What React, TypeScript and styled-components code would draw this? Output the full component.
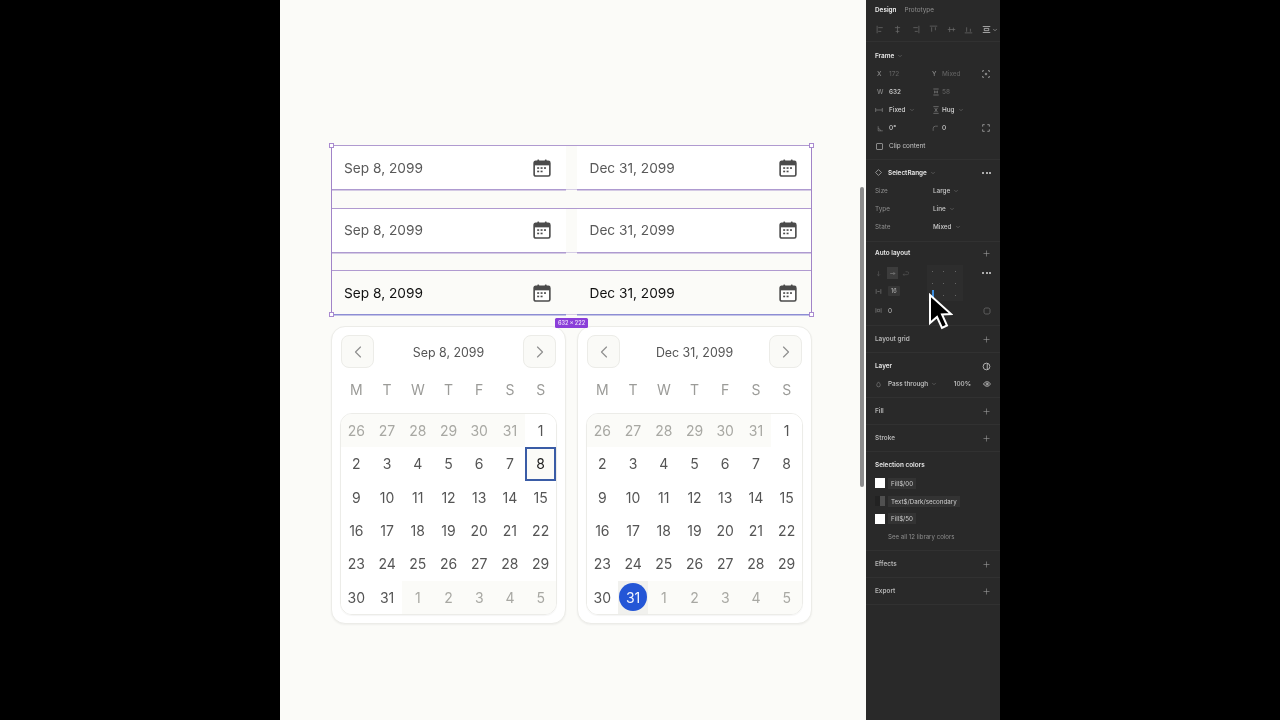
import React from "react";
import styled, { createGlobalStyle } from "styled-components";
import { ChevronLeft, ChevronRight, Plus, Eye, ChevronDown } from "lucide-react";

const Global = createGlobalStyle`
  html, body { margin: 0; padding: 0; background: #000; height: 100%; overflow: hidden; }
  * { box-sizing: border-box; }
  #root { height: 100%; }
`;

const Stage = styled.div`
  width: 720px; height: 720px; margin-left: 280px; display: flex;
  font-family: Inter, "Liberation Sans", sans-serif;
  position: relative;
`;
const Canvas = styled.main`
  width: 586px; height: 720px; background: #fbfbf8; padding: 145px 0 0 51px; position: relative;
  filter: blur(0.3px);
`;
const Scrollbar = styled.div`
  position: absolute; right: 2px; top: 187px; width: 4px; height: 300px; background: #8c8c8c; border-radius: 2px;
`;
const Selection = styled.div`
  width: 481px; display: flex; flex-direction: column; gap: 17.5px; position: relative;
`;
const Outline = styled.span`
  position: absolute; inset: 0; border-left: 1px solid #a184c8; border-right: 1px solid #a184c8; pointer-events: none;
`;
const Handle = styled.span<{ $x: "left" | "right"; $y: "top" | "bottom" }>`
  position: absolute; width: 5px; height: 5px; background: #fff; border: 1px solid #a98ad0;
  ${(p) => p.$x}: -2px; ${(p) => p.$y}: -2px;
`;
const SizeBadge = styled.span`
  position: absolute; left: 224px; top: 173px; width: 33px; height: 10px; background: #8b3fd9; color: #e8d8f8;
  border-radius: 1.5px; font-size: 5.5px; font-weight: 600; line-height: 10px; text-align: center;
`;
const RangeRow = styled.div`
  height: 45px; display: flex; justify-content: space-between;
  border-top: 1.5px solid #b09ad0; border-bottom: 1.5px solid #d6cde6;
`;
const Field = styled.div<{ $active?: boolean }>`
  width: 235px; display: flex; align-items: center; justify-content: space-between; padding: 0 15px 0 13px;
  background: ${(p) => (p.$active ? "#fbfbf8" : "#fff")};
  color: ${(p) => (p.$active ? "#111" : "#595959")};
  font-size: 13.7px;
  box-shadow: 0 1.5px 0 ${(p) => (p.$active ? "#8d8dd4" : "#ae9ad0")};
  &:last-child { padding-left: 12.5px; }
`;
const Calendars = styled.div`
  width: 481px; margin-top: 11px; display: flex; justify-content: space-between;
`;
const Card = styled.section`
  width: 235px; height: 298px; background: #fff; border: 1.5px solid #ecece8; border-radius: 14px; padding: 8px 8px;
  box-shadow: 0 1px 2px rgba(0,0,0,.05);
`;
const CalHeader = styled.header`
  height: 33px; display: flex; align-items: center; justify-content: space-between; padding: 0 1px;
`;
const NavButton = styled.button`
  width: 33px; height: 33px; padding: 0; border: 1.5px solid #ecece8; border-radius: 8px; background: #fafaf7;
  color: #8f8f8f; display: flex; align-items: center; justify-content: center;
`;
const CalTitle = styled.span`
  font-size: 12.4px; color: #555; padding-top: 1px;
`;
const WeekRow = styled.div`
  display: grid; grid-template-columns: repeat(7, 1fr); padding: 0 1px; height: 20px; margin-top: 11px; align-items: center;
`;
const WeekDay = styled.span`
  text-align: center; font-size: 14px; color: #9b9b98;
`;
const DayGrid = styled.div`
  margin-top: 14px; height: 202px; border: 1px solid #ecece8; border-radius: 12px; overflow: hidden;
  display: grid; grid-template-columns: repeat(7, 1fr); grid-auto-rows: 33.33px;
  box-shadow: 0 1px 1px rgba(0,0,0,.04);
`;
const Day = styled.div<{ $muted?: boolean; $boxed?: boolean; $range?: boolean }>`
  display: flex; align-items: center; justify-content: center; font-size: 14px;
  color: ${(p) => (p.$muted ? "#a8a8a3" : p.$boxed ? "#222" : "#555")};
  background: ${(p) => (p.$range ? "#f1f1ee" : p.$muted || p.$boxed ? "#fbfbf8" : "#fff")};
  border: ${(p) => (p.$boxed ? "2px solid #3a5ca6" : "none")};
`;
const Circle = styled.span`
  width: 28px; height: 28px; border-radius: 50%; background: #2456d6; color: #f4f6fd;
  display: flex; align-items: center; justify-content: center;
`;

const Panel = styled.aside`
  width: 134px; height: 720px; background: #292929; color: #d6d6d6; font-size: 6.4px; flex: none;
  filter: blur(0.4px);
`;
const Section = styled.div<{ $top?: number; $bottom?: number }>`
  padding: ${(p) => p.$top ?? 0}px 0 ${(p) => p.$bottom ?? 0}px;
  border-bottom: 1px solid #313131;
`;
const PanelRow = styled.div<{ $h?: number }>`
  height: ${(p) => p.$h ?? 18}px; padding: 0 9px; display: flex; align-items: center; position: relative;
`;
const Tabs = styled(PanelRow)` gap: 8px; padding-top: 1px; `;
const Tab = styled.span<{ $on?: boolean }>`
  font-size: 6.4px; font-weight: ${(p) => (p.$on ? 600 : 400)}; color: ${(p) => (p.$on ? "#f0f0f0" : "#8e8e8e")};
`;
const AlignRow = styled(PanelRow)`
  gap: 8.75px; padding: 0 0 0 9.5px; color: #6a6a6a;
  & svg { flex: none; }
`;
const AlignMenu = styled.span` color: #c8c8c8; display: flex; align-items: center; flex: none; `;
const MenuCaret = styled(ChevronDown)` width: 6px; height: 6px; margin-left: 1px; color: #c8c8c8; flex: none; `;
const Heading = styled.span<{ $dim?: boolean }>`
  font-weight: 600; color: ${(p) => (p.$dim ? "#b4b4b4" : "#e6e6e6")};
`;
const Spacer = styled.span` flex: 1; `;
const Caret = styled(ChevronDown)` width: 6px; height: 6px; margin-left: 3px; color: #7a7a7a; flex: none; `;
const AddIcon = styled(Plus)` width: 9px; height: 9px; color: #a0a0a0; flex: none; `;
const Cell = styled.span<{ $w?: number; $dim?: boolean }>`
  display: flex; align-items: center; width: ${(p) => p.$w ?? 57}px; flex: none;
  color: ${(p) => (p.$dim ? "#5f5f5f" : "#d4d4d4")}; font-weight: 500;
`;
const Glyph = styled.span<{ $w?: number }>`
  width: ${(p) => p.$w ?? 13}px; flex: none; color: #8a8a8a; display: flex; align-items: center;
`;
const LetterGlyph = styled(Glyph)` padding-left: 2px; `;
const CornerGlyph = styled.span` width: 9px; color: #c0c0c0; display: flex; align-items: center; flex: none; `;
const DiamondGlyph = styled(Glyph)` color: #d8d8d8; `;
const PropLabel = styled.span`
  width: 58px; flex: none; color: #8c8c8c;
`;
const PropValue = styled.span`
  display: flex; align-items: center; color: #c9c9c9; font-weight: 500;
`;
const LayerEye = styled(Eye)` width: 8px; height: 8px; color: #ddd; margin-left: 12px; flex: none; `;
const CheckBox = styled.span`
  width: 7px; height: 7px; border: 1px solid #8a8a8a; border-radius: 1px; margin: 0 6px 0 1px;
`;
const ClipLabel = styled.span` color: #c4c4c4; `;
const Dots = styled.span`
  display: flex; gap: 1.5px; color: #d8d8d8; flex: none;
  & > i { width: 2px; height: 2px; border-radius: 50%; background: currentColor; }
`;
const AutoBody = styled.div`
  display: flex; padding: 0 9px; position: relative; height: 63px;
`;
const AutoCol = styled.div`
  width: 52px; display: flex; flex-direction: column; color: #8a8a8a;
`;
const AutoLine = styled.div<{ $h: number }>`
  height: ${(p) => p.$h}px; display: flex; align-items: center; gap: 6px;
`;
const DirGroup = styled.div`
  display: flex; gap: 2.5px; margin-left: -2px;
`;
const DirBtn = styled.span<{ $on?: boolean }>`
  width: 11px; height: 12px; display: flex; align-items: center; justify-content: center;
  background: ${(p) => (p.$on ? "#3c3c3c" : "transparent")};
  color: ${(p) => (p.$on ? "#8a8a8a" : "#5a5a5a")};
`;
const GapValue = styled.span`
  background: #363636; padding: 2px 3px; border-radius: 1px; color: #bdbdbd; font-size: 5.5px;
`;
const PadValue = styled.span` color: #c0c0c0; `;
const AlignBox = styled.div`
  width: 36px; height: 36px; margin-top: 3px; padding: 0 2px 0 0; background: #2d2d2d; display: grid;
  grid-template-columns: repeat(3, 1fr); grid-template-rows: repeat(3, 1fr); place-items: center; flex: none;
`;
const GridDot = styled.i<{ $on?: boolean }>`
  width: ${(p) => (p.$on ? 2 : 1)}px; height: ${(p) => (p.$on ? 10 : 1)}px;
  background: ${(p) => (p.$on ? "#3d8fe0" : "#666")};
`;
const AutoSide = styled.div`
  flex: 1; display: flex; flex-direction: column; align-items: flex-end; justify-content: space-between; padding: 10px 0;
`;
const ClipIcon = styled.span` color: #777; display: flex; `;
const Swatch = styled.span<{ $dark?: boolean }>`
  width: 10px; height: 10px; flex: none; margin-right: 3px;
  background: ${(p) => (p.$dark ? "linear-gradient(90deg,#222 0 50%,#505050 50%)" : "#fff")};
`;
const TokenName = styled.span`
  background: #333; padding: 2px 3px; color: #cfcfcf; font-size: 6.2px;
`;
const LibraryLink = styled.span`
  padding-left: 13px; color: #8e8e8e; font-size: 6.1px;
`;
const Cursor = styled.svg`
  position: absolute; left: 648px; top: 293px; width: 25px; height: 38px; z-index: 3;
`;

function CalendarIcon() {
  return (
    <svg width="18" height="18" viewBox="0 0 19 19">
      <rect x="1.2" y="2.5" width="16.6" height="15.5" rx="1.6" fill="#fff" stroke="#4b4b4b" strokeWidth="1.7" />
      <rect x="1.2" y="2.5" width="16.6" height="4.2" fill="#4b4b4b" />
      <rect x="4.6" y="0.4" width="1.9" height="3.4" rx=".6" fill="#4b4b4b" />
      <rect x="12.5" y="0.4" width="1.9" height="3.4" rx=".6" fill="#4b4b4b" />
      <g fill="#4b4b4b">
        <rect x="4.4" y="8.7" width="2.1" height="1.7" /><rect x="8" y="8.7" width="2.1" height="1.7" /><rect x="11.6" y="8.7" width="2.1" height="1.7" />
        <rect x="4.4" y="12.3" width="2.1" height="1.7" /><rect x="8" y="12.3" width="2.1" height="1.7" />
      </g>
    </svg>
  );
}

const Mini = ({ d, size = 9 }: { d: string; size?: number }) => (
  <svg width={size} height={size} viewBox="0 0 12 12" fill="none" stroke="currentColor" strokeWidth="1">
    <path d={d} />
  </svg>
);

const week = ["M", "T", "W", "T", "F", "S", "S"];
type D = { n: number; muted?: boolean; boxed?: boolean; sel?: boolean };
function days(mode: "start" | "end"): D[] {
  const out: D[] = [];
  [26, 27, 28, 29, 30, 31].forEach((n) => out.push({ n, muted: true }));
  for (let n = 1; n <= 31; n++) {
    out.push({ n, boxed: mode === "start" && n === 8, sel: mode === "end" && n === 31 });
  }
  [1, 2, 3, 4, 5].forEach((n) => out.push({ n, muted: true }));
  return out;
}

function Calendar({ title, mode }: { title: string; mode: "start" | "end" }) {
  return (
    <Card>
      <CalHeader>
        <NavButton><ChevronLeft size={20} strokeWidth={1.4} /></NavButton>
        <CalTitle>{title}</CalTitle>
        <NavButton><ChevronRight size={20} strokeWidth={1.4} /></NavButton>
      </CalHeader>
      <WeekRow>{week.map((w, i) => <WeekDay key={i}>{w}</WeekDay>)}</WeekRow>
      <DayGrid>
        {days(mode).map((d, i) => (
          <Day key={i} $muted={d.muted} $boxed={d.boxed} $range={d.sel}>
            {d.sel ? <Circle>{d.n}</Circle> : d.n}
          </Day>
        ))}
      </DayGrid>
    </Card>
  );
}

function Collapsed({ label }: { label: string }) {
  return (
    <Section>
      <PanelRow $h={26}><Heading $dim>{label}</Heading><Spacer /><AddIcon strokeWidth={1.5} /></PanelRow>
    </Section>
  );
}
const More = () => <Dots><i /><i /><i /></Dots>;

export default function App() {
  return (
    <>
      <Global />
      <Stage>
        <Canvas>
          <Selection>
            {[false, false, true].map((active, i) => (
              <RangeRow key={i}>
                <Field $active={active}>Sep 8, 2099<CalendarIcon /></Field>
                <Field $active={active}>Dec 31, 2099<CalendarIcon /></Field>
              </RangeRow>
            ))}
            <Outline />
            <Handle $x="left" $y="top" />
            <Handle $x="right" $y="top" />
            <Handle $x="left" $y="bottom" />
            <Handle $x="right" $y="bottom" />
            <SizeBadge>632 × 222</SizeBadge>
          </Selection>
          <Calendars>
            <Calendar title="Sep 8, 2099" mode="start" />
            <Calendar title="Dec 31, 2099" mode="end" />
          </Calendars>
          <Scrollbar />
        </Canvas>
        <Panel>
          <Section>
            <Tabs><Tab $on>Design</Tab><Tab>Prototype</Tab></Tabs>
            <AlignRow $h={23}>
              <Mini d="M1.500 1v10M3 3.500h6M3 8.500h4" />
              <Mini d="M6 1v10M2.500 3.500h7M3.500 8.500h5" />
              <Mini d="M10.500 1v10M3 3.500h6M5 8.500h4" />
              <Mini d="M1 1.500h10M3.500 3v6M8.500 3v4" />
              <Mini d="M1 6h10M3.500 2.500v7M8.500 3.500v5" />
              <Mini d="M1 10.500h10M3.500 3v6M8.500 5v4" />
              <AlignMenu><Mini d="M1 2h10M1 10h10M3 4.500h6v3H3z" /><MenuCaret /></AlignMenu>
            </AlignRow>
          </Section>
          <Section $top={5} $bottom={4}>
            <PanelRow><Heading>Frame</Heading><Caret /></PanelRow>
            <PanelRow>
              <Cell $dim><LetterGlyph $w={14}>X</LetterGlyph>172</Cell>
              <Cell $dim $w={50}><Glyph $w={10}>Y</Glyph>Mixed</Cell>
              <Spacer />
              <CornerGlyph><Mini d="M1 3V1h2M9 1h2v2M11 9v2H9M3 11H1V9M5 5h2v2H5z" size={8} /></CornerGlyph>
            </PanelRow>
            <PanelRow>
              <Cell><LetterGlyph $w={14}>W</LetterGlyph>632</Cell>
              <Cell $dim $w={50}><Glyph $w={10}><Mini d="M2 1.500h8M2 10.500h8M4 4v4M8 4v4M4 6h4" size={8} /></Glyph>58</Cell>
            </PanelRow>
            <PanelRow>
              <Cell><Glyph $w={14}><Mini d="M1 3v6M11 3v6M1 6h10" size={8} /></Glyph>Fixed<Caret /></Cell>
              <Cell $w={50}><Glyph $w={10}><Mini d="M2 1h8M2 11h8M4 3l4 6M8 3l-4 6" size={8} /></Glyph>Hug<Caret /></Cell>
            </PanelRow>
            <PanelRow>
              <Cell><LetterGlyph $w={14}><Mini d="M2 2v8h8M2 6c2 0 4 2 4 4" size={7} /></LetterGlyph>0°</Cell>
              <Cell $w={50}><Glyph $w={10}><Mini d="M2 10V6a4 4 0 0 1 4-4h4" size={7} /></Glyph>0</Cell>
              <Spacer />
              <CornerGlyph><Mini d="M1 4V1h3M8 1h3v3M11 8v3H8M4 11H1V8" size={8} /></CornerGlyph>
            </PanelRow>
            <PanelRow><CheckBox /><ClipLabel>Clip content</ClipLabel></PanelRow>
          </Section>
          <Section $top={3.5} $bottom={5.5}>
            <PanelRow>
              <DiamondGlyph><Mini d="M6 1l5 5-5 5-5-5z" size={7} /></DiamondGlyph>
              <Heading>SelectRange</Heading><Caret /><Spacer /><More />
            </PanelRow>
            <PanelRow><PropLabel>Size</PropLabel><PropValue>Large<Caret /></PropValue></PanelRow>
            <PanelRow><PropLabel>Type</PropLabel><PropValue>Line<Caret /></PropValue></PanelRow>
            <PanelRow><PropLabel>State</PropLabel><PropValue>Mixed<Caret /></PropValue></PanelRow>
          </Section>
          <Section $top={2}>
            <PanelRow><Heading>Auto layout</Heading><Spacer /><AddIcon strokeWidth={1.5} /></PanelRow>
            <AutoBody>
              <AutoCol>
                <AutoLine $h={22}>
                  <DirGroup>
                    <DirBtn><Mini d="M6 2v8M3.500 7.500L6 10l2.500-2.500" size={7} /></DirBtn>
                    <DirBtn $on><Mini d="M2 6h8M7.500 3.500L10 6l-2.500 2.500" size={7} /></DirBtn>
                    <DirBtn><Mini d="M2 8h7a2 2 0 0 0 0-5H6M4 6L2 8l2 2" size={7} /></DirBtn>
                  </DirGroup>
                </AutoLine>
                <AutoLine $h={14}><Mini d="M2 2v8M10 2v8M4 6h4" size={7} /><GapValue>16</GapValue></AutoLine>
                <AutoLine $h={25}><Mini d="M1.500 2v8M10.500 2v8M4 4h4v4H4z" size={7} /><PadValue>0</PadValue></AutoLine>
              </AutoCol>
              <AlignBox>
                <GridDot /><GridDot /><GridDot />
                <GridDot /><GridDot /><GridDot />
                <GridDot $on /><GridDot /><GridDot />
              </AlignBox>
              <AutoSide>
                <More />
                <ClipIcon><Mini d="M4 1.500h4M4 10.500h4M1.500 4v4M10.500 4v4M1.500 4A3 3 0 0 1 4 1.500M8 1.500A3 3 0 0 1 10.500 4M10.500 8A3 3 0 0 1 8 10.500M4 10.500A3 3 0 0 1 1.500 8" size={8} /></ClipIcon>
              </AutoSide>
            </AutoBody>
          </Section>
          <Collapsed label="Layout grid" />
          <Section $top={4} $bottom={4}>
            <PanelRow><Heading>Layer</Heading><Spacer /><Mini d="M1.500 6a4.500 4.500 0 0 1 9 0a4.500 4.500 0 0 1-9 0M7 2v8" /></PanelRow>
            <PanelRow>
              <Glyph><Mini d="M6 1.500C4 4 3 5.500 3 7a3 3 0 0 0 6 0c0-1.500-1-3-3-5.500z" size={7} /></Glyph>
              <PropValue>Pass through<Caret /></PropValue><Spacer />
              <PropValue>100%</PropValue><LayerEye />
            </PanelRow>
          </Section>
          <Collapsed label="Fill" />
          <Collapsed label="Stroke" />
          <Section $top={4} $bottom={5}>
            <PanelRow><Heading>Selection colors</Heading></PanelRow>
            <PanelRow><Swatch /><TokenName>Fill$/00</TokenName></PanelRow>
            <PanelRow><Swatch $dark /><TokenName>Text$/Dark/secondary</TokenName></PanelRow>
            <PanelRow $h={17}><Swatch /><TokenName>Fill$/50</TokenName></PanelRow>
            <PanelRow><LibraryLink>See all 12 library colors</LibraryLink></PanelRow>
          </Section>
          <Collapsed label="Effects" />
          <Collapsed label="Export" />
        </Panel>
        <Cursor viewBox="0 0 25 38">
          <path d="M2 2v28l7-6 5 11 5-2.500-5-11 9-.500z" fill="#000" stroke="#fff" strokeWidth="2" strokeLinejoin="miter" />
        </Cursor>
      </Stage>
    </>
  );
}
